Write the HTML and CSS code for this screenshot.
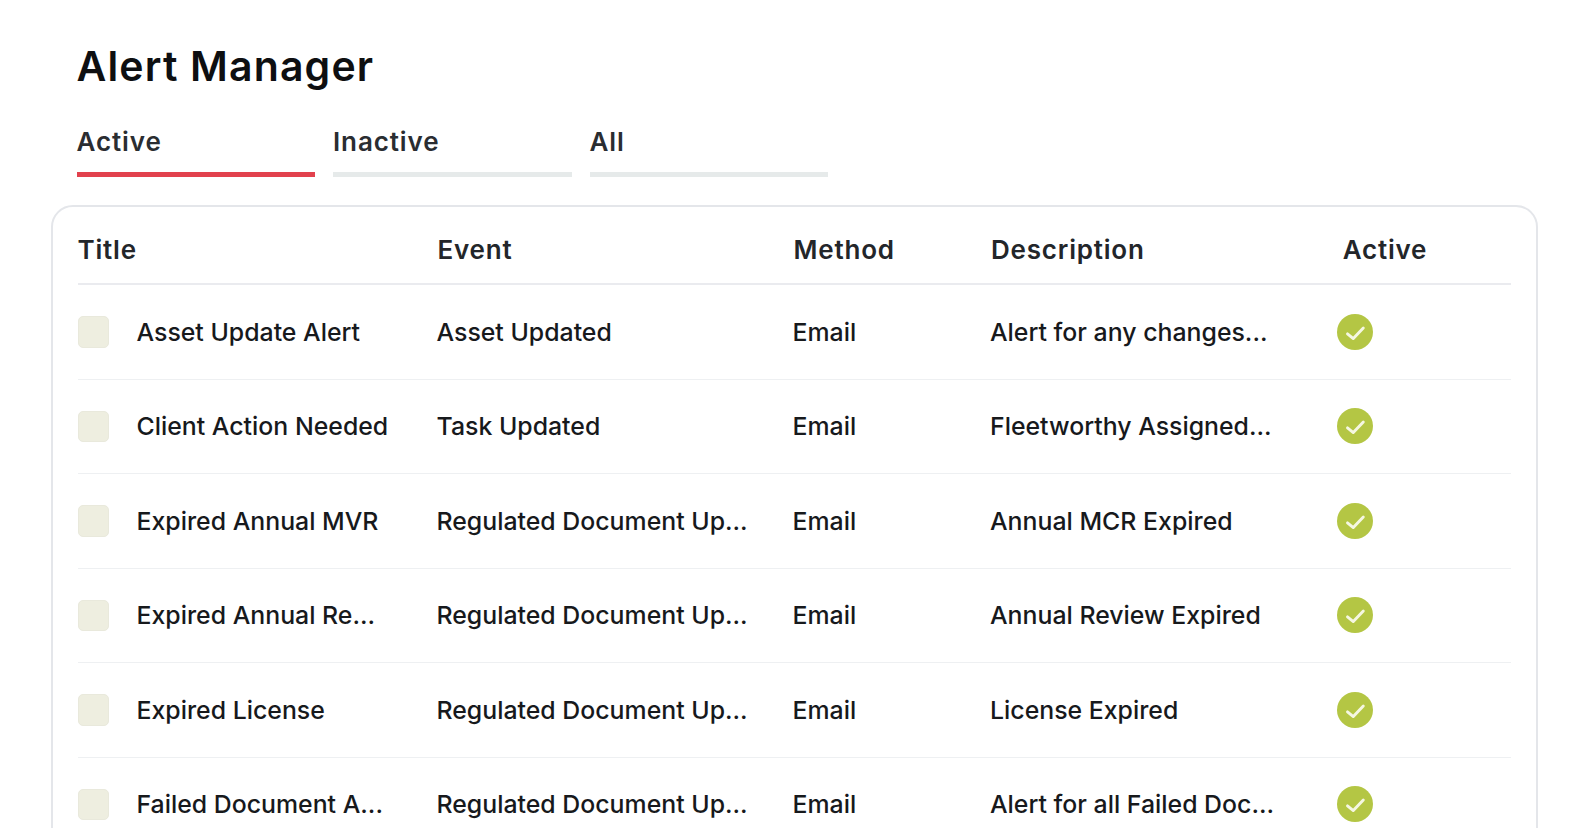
FILE: index.html
```html
<!DOCTYPE html>
<html lang="en">
<head>
<meta charset="utf-8">
<title>Alert Manager</title>
<link rel="stylesheet" href="styles.css">
</head>
<body>
<svg class="defs" width="0" height="0" aria-hidden="true">
  <symbol id="check" viewBox="0 0 36 36">
    <circle cx="18" cy="18" r="18" fill="#b4c644"/>
    <path d="M10.5 19.8l5.8 4.8 10-10.6" fill="none" stroke="#f5f7e2" stroke-width="2.9" stroke-linecap="round" stroke-linejoin="round"/>
  </symbol>
</svg>
<main class="page">
  <h1 class="title">Alert Manager</h1>
  <nav class="tabs">
    <div class="tab tab-current">Active</div>
    <div class="tab">Inactive</div>
    <div class="tab">All</div>
  </nav>
  <section class="card">
    <div class="row head">
      <div>Title</div><div>Event</div><div>Method</div><div>Description</div><div>Active</div>
    </div>
    <div class="row item">
      <div class="name"><span class="box"></span>Asset Update Alert</div><div>Asset Updated</div><div>Email</div><div>Alert for any changes...</div><div class="state"><svg class="ok"><use href="#check"/></svg></div>
    </div>
    <div class="row item">
      <div class="name"><span class="box"></span>Client Action Needed</div><div>Task Updated</div><div>Email</div><div>Fleetworthy Assigned...</div><div class="state"><svg class="ok"><use href="#check"/></svg></div>
    </div>
    <div class="row item">
      <div class="name"><span class="box"></span>Expired Annual MVR</div><div>Regulated Document Up...</div><div>Email</div><div>Annual MCR Expired</div><div class="state"><svg class="ok"><use href="#check"/></svg></div>
    </div>
    <div class="row item">
      <div class="name"><span class="box"></span>Expired Annual Re...</div><div>Regulated Document Up...</div><div>Email</div><div>Annual Review Expired</div><div class="state"><svg class="ok"><use href="#check"/></svg></div>
    </div>
    <div class="row item">
      <div class="name"><span class="box"></span>Expired License</div><div>Regulated Document Up...</div><div>Email</div><div>License Expired</div><div class="state"><svg class="ok"><use href="#check"/></svg></div>
    </div>
    <div class="row item">
      <div class="name"><span class="box"></span>Failed Document A...</div><div>Regulated Document Up...</div><div>Email</div><div>Alert for all Failed Doc...</div><div class="state"><svg class="ok"><use href="#check"/></svg></div>
    </div>
  </section>
</main>
</body>
</html>
```
FILE: styles.css
```css
html, body {
  margin: 0;
  height: 828px;
  overflow: hidden;
  background: #fff;
}
body {
  font-family: Inter, "Liberation Sans", sans-serif;
  color: #1b1d20;
}
.defs { display: block; height: 0; }
.page { padding: 40px 38.5px 0 51px; }
.title {
  margin: 0 0 0 25.5px;
  font-size: 41px;
  line-height: 52px;
  font-weight: 600;
  letter-spacing: 1.15px;
  color: #0e0f11;
}
.tabs {
  display: flex;
  gap: 18px;
  margin: 35px 0 28.5px 25.5px;
}
.tab {
  width: 238.5px;
  height: 49.5px;
  box-sizing: border-box;
  border-bottom: 5px solid #e6eaea;
  font-size: 26px;
  line-height: 30px;
  font-weight: 600;
  letter-spacing: 0.9px;
  color: #2a2d31;
}
.tab-current { border-bottom-color: #e2414d; }
.card {
  box-sizing: border-box;
  height: 800px;
  padding: 0 24.5px;
  border: 2px solid #e4e6ea;
  border-radius: 22px;
}
.row {
  display: grid;
  grid-template-columns: 360px 356px 197.5px 351.7px 1fr;
  align-items: center;
}
.head {
  height: 78px;
  box-sizing: border-box;
  padding-top: 8px;
  border-bottom: 2px solid #eaebef;
  font-size: 26px;
  font-weight: 600;
  letter-spacing: 0.8px;
  color: #23262a;
}
.item {
  height: 94.5px;
  box-sizing: border-box;
  border-bottom: 1px solid #eef0f2;
  font-size: 24.85px;
  font-weight: 500;
  color: #17191c;
}
.item > div { margin-left: -1px; }
.item > .name { margin-left: 0; }
.name { display: flex; align-items: center; }
.box {
  width: 31.5px;
  height: 31.5px;
  margin-right: 27.5px;
  border-radius: 5px;
  background: #eeeee0;
  border: 1px solid #e9e9dc;
  box-sizing: border-box;
}
.ok { display: block; width: 36px; height: 36px; margin-left: -5px; }
```
